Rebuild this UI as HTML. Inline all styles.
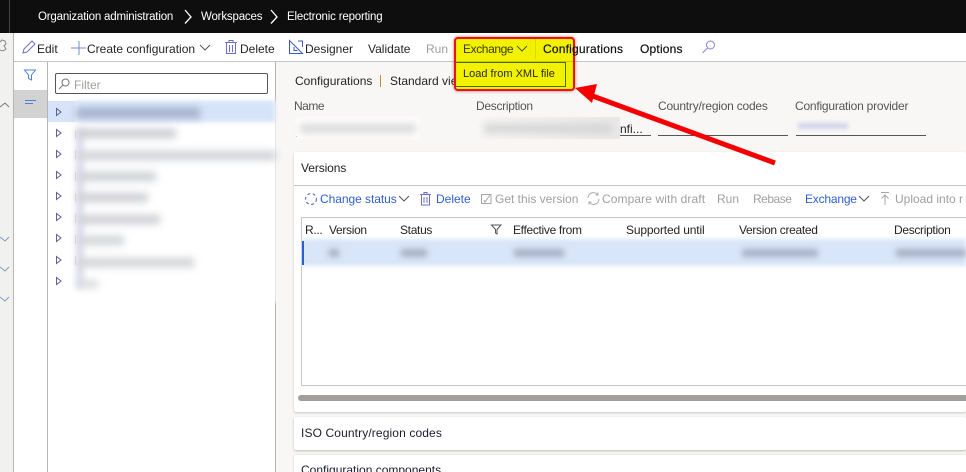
<!DOCTYPE html>
<html><head><meta charset="utf-8">
<style>
html,body{margin:0;padding:0;width:966px;height:472px;overflow:hidden;background:#fff}
body{position:relative;font-family:"Liberation Sans",sans-serif;font-size:12px;color:#252423}
.a{position:absolute}
.t{position:absolute;white-space:nowrap;line-height:16px;font-size:12px}
.g{color:#a19f9d}.b{color:#2f5fd0}
.l{color:#555;letter-spacing:-.22px}
.h{letter-spacing:-.32px}
.c{color:#fff;font-size:11.5px;letter-spacing:-.18px}
.bl{position:absolute;filter:blur(4px)}
svg{position:absolute;overflow:visible}
</style></head><body>
<!-- top bar -->
<div class="a" style="left:0;top:0;width:966px;height:33px;background:#0e0e0e"></div>
<div class="a" style="left:9px;top:0;width:1px;height:33px;background:#444"></div>
<div class="t c" style="left:38px;top:9px">Organization administration</div>
<div class="t c" style="left:201px;top:9px">Workspaces</div>
<div class="t c" style="left:287px;top:9px">Electronic reporting</div>
<svg style="left:0;top:0" width="966" height="33" fill="none" stroke="#fff" stroke-width="1.300"><path d="M185 10l6 7-6 6.500M271 10l6 7-6 6.500"/></svg>

<!-- left rail -->
<div class="a" style="left:0;top:33px;width:13px;height:439px;background:#f1f1f0;border-right:1px solid #b5b5b5"></div>
<svg style="left:0;top:33px" width="14" height="439" fill="none" stroke="#888" stroke-width="1"><path d="M0 9l2-2 3 1 1 3-2 2 2 3-3 2-3-1"/><path d="M0 74l5-4 4 4" stroke="#777"/><path d="M0 204l5 4 4-4M0 234l5 4 4-4M0 264l5 4 4-4" stroke="#7f9bc0"/></svg>

<!-- action bar -->
<div class="a" style="left:14px;top:61px;width:952px;height:1px;background:#c6c6c6"></div>
<svg style="left:22px;top:40px" width="14" height="14" fill="none" stroke="#6a6fd0" stroke-width="1"><path d="M1 13l1-4 8-8 3 3-8 8z"/></svg>
<div class="t" style="left:37px;top:41px">Edit</div>
<svg style="left:71px;top:40px" width="16" height="16" fill="none" stroke="#6f8fd8" stroke-width="1"><path d="M0 8h15M8 1v14"/></svg>
<div class="t" style="left:87px;top:41px">Create configuration</div>
<svg style="left:199px;top:44px" width="12" height="8" fill="none" stroke="#555" stroke-width="1"><path d="M1 1l5 5 5-5"/></svg>
<svg style="left:225px;top:40px" width="12" height="15" fill="none" stroke="#6a6fd0" stroke-width="1"><path d="M0 2.500h12M4 2V.5h4V2M1.500 3v10.500h9V3M4.500 5v7M7.500 5v7"/></svg>
<div class="t" style="left:240px;top:41px">Delete</div>
<svg style="left:289px;top:40px" width="15" height="15" fill="none" stroke="#3a5cc0" stroke-width="1"><path d="M.5.500l13 13H.5zM5 7v3.500h3.500M9 1h4.500v6"/></svg>
<div class="t" style="left:305px;top:41px">Designer</div>
<div class="t" style="left:368px;top:41px">Validate</div>
<div class="t g" style="left:426px;top:41px">Run</div>
<div class="t" style="left:640px;top:41px;color:#111;-webkit-text-stroke:.2px #111;letter-spacing:.2px">Options</div>
<svg style="left:702px;top:40px" width="14" height="14" fill="none" stroke="#8a80e0" stroke-width="1"><circle cx="8.500" cy="5" r="4"/><path d="M5.500 8l-5 5"/></svg>

<!-- tree pane -->
<div class="a" style="left:47px;top:62px;width:1px;height:410px;background:#b5b5b5"></div>
<div class="a" style="left:275px;top:62px;width:1px;height:410px;background:#b5b5b5"></div>
<div class="a" style="left:276px;top:62px;width:690px;height:410px;background:#f8f7f6"></div>
<svg style="left:24px;top:69px" width="13" height="13" fill="none" stroke="#4f80d0" stroke-width="1"><path d="M.5 1h11L7.500 6v5l-3-1.500V6z"/></svg>
<div class="a" style="left:14px;top:90px;width:33px;height:28px;background:#d2d2d2"></div>
<svg style="left:25px;top:100px" width="12" height="6" stroke="#4f80d0" stroke-width="1"><path d="M0 .5h11M0 3.500h8"/></svg>
<div class="a" style="left:55px;top:73px;width:213px;height:21px;border:1px solid #555;border-radius:2px;box-sizing:border-box"></div>
<svg style="left:58px;top:78px" width="12" height="12" fill="none" stroke="#777" stroke-width="1"><circle cx="7.500" cy="4.500" r="3.500"/><path d="M5 7l-4 4"/></svg>
<div class="t g" style="left:74px;top:77px">Filter</div>
<div class="a" style="left:48px;top:101px;width:227px;height:21px;background:#d6e3f8"></div>
<svg style="left:56px;top:108px" width="6" height="180" fill="none" stroke="#5f5f98" stroke-width="1"><path d="M.5.500l4.500 3.500-4.500 3.500zM.5 21.500l4.500 3.500-4.500 3.500zM.5 42.500l4.500 3.500-4.500 3.500zM.5 63.500l4.500 3.500-4.500 3.500zM.5 84.500l4.500 3.500-4.500 3.500zM.5 105.500l4.500 3.500-4.500 3.500zM.5 126.500l4.500 3.500-4.500 3.500zM.5 148.500l4.500 3.500-4.500 3.500zM.5 169.500l4.500 3.500-4.500 3.500z"/></svg>
<svg style="left:75px;top:130px" width="1" height="160" stroke="#e8b080" stroke-width="1"><path d="M.5 0v9M.5 20v9M.5 42v9M.5 63v9M.5 84v9M.5 105v9M.5 126v9"/></svg>
<div class="a" style="left:76px;top:101px;width:200px;height:202px;background:#fff;filter:blur(1.500px)"></div>
<div class="a" style="left:76px;top:101px;width:199px;height:21px;background:#d6e3f8;filter:blur(2.500px)"></div>
<div class="a" style="left:76px;top:128px;width:8px;height:160px;background:#d4d6ea;filter:blur(3px);opacity:.8"></div>
<div class="bl" style="left:76px;top:108px;width:124px;height:10px;background:#a4aec8"></div>
<div class="bl" style="left:78px;top:129px;width:98px;height:9px;background:#c8cacf"></div>
<div class="bl" style="left:78px;top:151px;width:198px;height:9px;background:#ced0d4"></div>
<div class="bl" style="left:78px;top:172px;width:78px;height:9px;background:#ccced2"></div>
<div class="bl" style="left:78px;top:193px;width:70px;height:9px;background:#ccced2"></div>
<div class="bl" style="left:78px;top:215px;width:82px;height:9px;background:#ccced2"></div>
<div class="bl" style="left:78px;top:236px;width:46px;height:9px;background:#d0d2d6"></div>
<div class="bl" style="left:78px;top:258px;width:116px;height:9px;background:#d0d2d6"></div>
<div class="bl" style="left:78px;top:280px;width:20px;height:8px;background:#d8dade"></div>

<!-- details header -->
<div class="t" style="left:295px;top:73px">Configurations</div>
<div class="a" style="left:380px;top:75px;width:1px;height:12px;background:#c98a30"></div>
<div class="t" style="left:390px;top:73px">Standard vie</div>
<div class="t l" style="left:294px;top:98px;letter-spacing:-.5px">Name</div>
<div class="t l" style="left:476px;top:98px;letter-spacing:-.3px">Description</div>
<div class="t l" style="left:658px;top:98px">Country/region codes</div>
<div class="t l" style="left:795px;top:98px">Configuration provider</div>
<div class="a" style="left:296px;top:136px;width:1px;height:1px;background:#555"></div>
<div class="a" style="left:296px;top:117px;width:124px;height:22px;background:#fdfdfd;filter:blur(1px)"></div>
<div class="bl" style="left:300px;top:124px;width:116px;height:9px;background:#d8d8d8"></div>
<div class="a" style="left:480px;top:117px;width:140px;height:22px;background:linear-gradient(90deg,#f6f6f5,#e8e8e8)"></div>
<div class="bl" style="left:484px;top:124px;width:128px;height:9px;background:#d4d4d4"></div>
<div class="a" style="left:620px;top:135px;width:31px;height:1px;background:#555"></div>
<div class="t" style="left:620px;top:121px">nfi...</div>
<div class="a" style="left:658px;top:135px;width:130px;height:1px;background:#555"></div>
<div class="a" style="left:796px;top:135px;width:130px;height:1px;background:#555"></div>
<div class="bl" style="left:798px;top:123px;width:50px;height:6px;background:#cfd4ea;filter:blur(2px)"></div>

<!-- versions card -->
<div class="a" style="left:294px;top:152px;width:672px;height:260px;background:#fff;border-radius:2px;box-shadow:0 1px 2px rgba(0,0,0,.2)"></div>
<div class="t" style="left:301px;top:160px;color:#222;letter-spacing:-.1px">Versions</div>
<div class="a" style="left:294px;top:185px;width:672px;height:1px;background:#c6c6c6"></div>
<svg style="left:304px;top:192px" width="14" height="14" fill="none" stroke="#6a6fd0" stroke-width="1.200" stroke-dasharray="3 2.500"><circle cx="7" cy="7" r="5.500"/></svg>
<div class="t b" style="left:320px;top:191px;letter-spacing:-.05px">Change status</div>
<svg style="left:398px;top:195px" width="12" height="8" fill="none" stroke="#555" stroke-width="1"><path d="M1 1l5 5 5-5"/></svg>
<svg style="left:420px;top:192px" width="11" height="14" fill="none" stroke="#6a6fd0" stroke-width="1"><path d="M0 2.500h11M4 2V.5h3V2M1.500 3v10h8V3M4 5v6M7 5v6"/></svg>
<div class="t b" style="left:436px;top:191px">Delete</div>
<svg style="left:481px;top:193px" width="11" height="11" fill="none" stroke="#a8a8a8" stroke-width="1"><path d="M.5 1.500h9.500v9H.5zM3 7l1 2 5-7"/></svg>
<div class="t g" style="left:495px;top:191px">Get this version</div>
<svg style="left:587px;top:192px" width="13" height="13" fill="none" stroke="#a8a8a8" stroke-width="1"><path d="M1 6a5.500 5.500 0 0 1 10-3M12 7a5.500 5.500 0 0 1-10 3M11 .5V3H8.500M2 12.500V10h2.500"/></svg>
<div class="t g" style="left:602px;top:191px;letter-spacing:.1px">Compare with draft</div>
<div class="t g" style="left:717px;top:191px">Run</div>
<div class="t g" style="left:753px;top:191px;letter-spacing:-.5px">Rebase</div>
<div class="t b" style="left:805px;top:191px;letter-spacing:-.2px">Exchange</div>
<svg style="left:858px;top:195px" width="12" height="8" fill="none" stroke="#555" stroke-width="1"><path d="M1 1l5 5 5-5"/></svg>
<svg style="left:880px;top:192px" width="11" height="14" fill="none" stroke="#a8a8a8" stroke-width="1"><path d="M1 .5h8M5 13V3M1.500 6.500L5 3l3.500 3.500"/></svg>
<div class="t g" style="left:895px;top:191px">Upload into r</div>

<!-- grid -->
<div class="a" style="left:301px;top:217px;width:665px;height:169px;border:1px solid #c8c8c8;border-right:0;box-sizing:border-box"></div>
<div class="t h" style="left:305px;top:222px">R...</div>
<div class="t h" style="left:329px;top:222px">Version</div>
<div class="t h" style="left:400px;top:222px">Status</div>
<svg style="left:491px;top:224px" width="11" height="11" fill="none" stroke="#555" stroke-width="1"><path d="M.5 1h9.500L6 5.500v4.500L4.500 9V5.500z"/></svg>
<div class="t h" style="left:513px;top:222px">Effective from</div>
<div class="t h" style="left:626px;top:222px;letter-spacing:-.15px">Supported until</div>
<div class="t h" style="left:739px;top:222px">Version created</div>
<div class="t h" style="left:894px;top:222px">Description</div>
<div class="a" style="left:302px;top:239px;width:664px;height:27px;background:#d9e5f8;filter:blur(2px)"></div>
<div class="a" style="left:302px;top:241px;width:2px;height:24px;background:#2a5fd8"></div>
<div class="bl" style="left:329px;top:249px;width:10px;height:8px;background:#a8b2c6;filter:blur(3px)"></div>
<div class="bl" style="left:401px;top:249px;width:26px;height:8px;background:#a8b2c6;filter:blur(3px)"></div>
<div class="bl" style="left:514px;top:249px;width:50px;height:8px;background:#a8b2c6;filter:blur(3px)"></div>
<div class="bl" style="left:742px;top:249px;width:76px;height:8px;background:#a8b2c6;filter:blur(3px)"></div>
<div class="bl" style="left:896px;top:249px;width:70px;height:8px;background:#a8b2c6;filter:blur(3px)"></div>
<div class="a" style="left:298px;top:395px;width:668px;height:6px;background:#a19f9d;border-radius:3px 0 0 3px"></div>

<!-- collapsed cards -->
<div class="a" style="left:294px;top:417px;width:672px;height:33px;background:#fff;border-radius:2px;box-shadow:0 1px 2px rgba(0,0,0,.25)"></div>
<div class="t" style="left:301px;top:425px;color:#1c1c30;letter-spacing:.12px">ISO Country/region codes</div>
<div class="a" style="left:294px;top:455px;width:672px;height:17px;background:#fff;border-radius:2px 2px 0 0;box-shadow:0 0 2px rgba(0,0,0,.15)"></div>
<div class="t" style="left:301px;top:462px;color:#1c1c30">Configuration components</div>

<!-- yellow highlight -->
<div class="a" style="left:454px;top:37px;width:121px;height:54px;background:#f2f200;border:2px solid #f01010;border-radius:4px;box-sizing:border-box;box-shadow:0 0 3px rgba(120,0,0,.55)"></div>
<div class="a" style="left:456px;top:61px;width:117px;height:1px;background:#c9c900"></div>
<div class="a" style="left:535px;top:39px;width:1px;height:20px;background:#d8d800"></div>
<div class="a" style="left:456px;top:62px;width:110px;height:25px;border:1px solid #4a6a10;border-left:0;box-sizing:border-box"></div>
<div class="t" style="left:463px;top:41px;color:#3a3a00;letter-spacing:-.4px">Exchange</div>
<svg style="left:516px;top:45px" width="12" height="8" fill="none" stroke="#555500" stroke-width="1"><path d="M1 1l5 5 5-5"/></svg>
<div class="t" style="left:543px;top:41px;color:#111;-webkit-text-stroke:.2px #111;letter-spacing:.2px">Configurations</div>
<div class="t" style="left:463px;top:66px;font-size:11px;color:#2a2a00">Load from XML file</div>

<!-- arrow -->
<svg style="left:0;top:0" width="966" height="472"><path d="M775 163L590 95" stroke="#f40000" stroke-width="5" fill="none"/><path d="M575 88l22-4-5 19z" fill="#f40000"/></svg>
</body></html>
